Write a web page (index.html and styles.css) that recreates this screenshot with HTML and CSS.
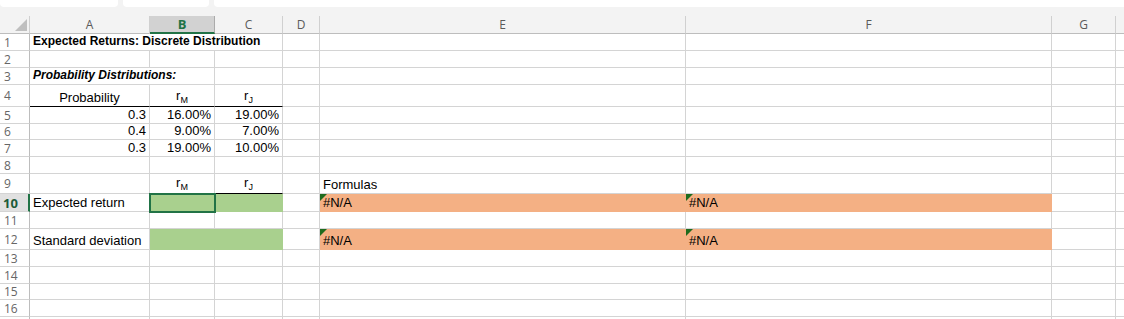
FILE: index.html
```html
<!DOCTYPE html>
<html>
<head>
    <meta charset="utf-8">
    <title>Expected Returns: Discrete Distribution</title>
    <link rel="stylesheet" href="styles.css">
</head>
<body>
    <div class="tabs">
        <div class="tab tab-first"></div>
        <div class="tab tab-second"></div>
        <div class="tab tab-rest"></div>
    </div>
    <div class="sheet" id="sheet"></div>

    <script>
        const columns = ["A", "B", "C", "D", "E", "F", "G", "H"];
        const activeColumn = "B";
        const activeRow = 10;
        const rowCount = 17;

        const cells = {
            A1: { text: "Expected Returns: Discrete Distribution", cls: "bold", span: 3 },
            A3: { text: "Probability Distributions:", cls: "bold italic", span: 2 },
            A4: { text: "Probability", cls: "center line-bottom" },
            B4: { html: "r<sub>M</sub>", cls: "center line-bottom" },
            C4: { html: "r<sub>J</sub>", cls: "center line-bottom" },
            A5: { text: "0.3", cls: "right" },
            B5: { text: "16.00%", cls: "right" },
            C5: { text: "19.00%", cls: "right" },
            A6: { text: "0.4", cls: "right" },
            B6: { text: "9.00%", cls: "right" },
            C6: { text: "7.00%", cls: "right" },
            A7: { text: "0.3", cls: "right" },
            B7: { text: "19.00%", cls: "right" },
            C7: { text: "10.00%", cls: "right" },
            B9: { html: "r<sub>M</sub>", cls: "center line-bottom" },
            C9: { html: "r<sub>J</sub>", cls: "center line-bottom" },
            E9: { text: "Formulas" },
            A10: { text: "Expected return" },
            B10: { cls: "green selected" },
            C10: { cls: "green" },
            E10: { text: "#N/A", cls: "orange err" },
            F10: { text: "#N/A", cls: "orange err" },
            A12: { text: "Standard deviation" },
            B12: { cls: "green", span: 2 },
            E12: { text: "#N/A", cls: "orange err" },
            F12: { text: "#N/A", cls: "orange err" }
        };

        function buildSheet() {
            const sheet = document.getElementById("sheet");

            const corner = document.createElement("div");
            corner.className = "corner";
            corner.innerHTML = '<span class="corner-mark"></span>';
            sheet.appendChild(corner);

            columns.forEach(col => {
                const head = document.createElement("div");
                head.className = "col-head" + (col === activeColumn ? " active" : "");
                head.textContent = col;
                sheet.appendChild(head);
            });

            for (let r = 1; r <= rowCount; r++) {
                const rowHead = document.createElement("div");
                rowHead.className = "row-head" + (r === activeRow ? " active" : "");
                rowHead.textContent = r;
                sheet.appendChild(rowHead);

                let skip = 0;
                columns.forEach(col => {
                    if (skip > 0) {
                        skip--;
                        return;
                    }
                    const data = cells[col + r] || {};
                    const cell = document.createElement("div");
                    cell.className = "cell " + (data.cls || "");
                    if (data.html || data.text) {
                        const value = document.createElement("span");
                        if (data.html) {
                            value.innerHTML = data.html;
                        } else {
                            value.textContent = data.text;
                        }
                        cell.appendChild(value);
                    }
                    if (data.span) {
                        cell.classList.add("span-" + data.span);
                        skip = data.span - 1;
                    }
                    sheet.appendChild(cell);
                });
            }
        }

        buildSheet();
    </script>
</body>
</html>
```

FILE: styles.css
```css
* {
    box-sizing: border-box;
}
body {
    margin: 0;
    overflow: hidden;
    background: #fff;
    font-family: "Liberation Sans", Arial, sans-serif;
}
.tabs {
    display: flex;
    gap: 5px;
    height: 16px;
    background: #f3f3f3;
}
.tab {
    height: 7px;
    background: #fff;
    border-radius: 0 0 4px 4px;
}
.tab-first {
    width: 118px;
}
.tab-second {
    width: 86px;
}
.tab-rest {
    flex: 1;
    border-radius: 0 0 0 4px;
}
.sheet {
    display: grid;
    grid-template-columns: 30px 120px 65px 68px 37px 366px 366px 64px 64px;
    grid-template-rows: 18px 17px 17px 17px 22px 17px 16px 17px 17px 20px 18px 17px 21px 17px 17px 16px 17px 17px;
    width: max-content;
}
.corner {
    background: #f3f3f3;
    border-right: 1px solid #d0d0d0;
    border-bottom: 1px solid #bdbdbd;
    display: flex;
    justify-content: flex-end;
    align-items: flex-end;
    padding: 0 2px 2px 0;
}
.corner-mark {
    width: 0;
    height: 0;
    border-bottom: 12px solid #bfbfbf;
    border-left: 12px solid transparent;
}
.col-head {
    background: #f3f3f3;
    border-right: 1px solid #d0d0d0;
    border-bottom: 1px solid #bdbdbd;
    display: flex;
    align-items: center;
    justify-content: center;
    font-family: "Open Sans", "Noto Sans", sans-serif;
    font-size: 12px;
    color: #5a5a5a;
}
.col-head.active {
    background: #d2d2d2;
    border-right-color: #ababab;
    border-bottom: 2px solid #217346;
    color: #217346;
    font-weight: bold;
    font-size: 13px;
}
.row-head {
    border-right: 1px solid #bdbdbd;
    border-bottom: 1px solid #d4d4d4;
    display: flex;
    align-items: center;
    padding-left: 4px;
    font-family: "Open Sans", "Noto Sans", sans-serif;
    font-size: 12px;
    color: #666;
}
.row-head.active {
    background: #e1e1e1;
    border-right: 2px solid #217346;
    color: #1d5c3a;
    font-weight: bold;
    font-size: 13px;
    padding-left: 3px;
}
.cell {
    position: relative;
    display: flex;
    align-items: flex-end;
    padding: 0 3px 1px;
    border-right: 1px solid #d4d4d4;
    border-bottom: 1px solid #d4d4d4;
    font-size: 13px;
    line-height: 15px;
    color: #000;
    white-space: nowrap;
}
.span-2 {
    grid-column: span 2;
}
.span-3 {
    grid-column: span 3;
}
.bold {
    font-weight: bold;
    font-size: 12px;
}
.italic {
    font-style: italic;
}
.right {
    justify-content: flex-end;
}
.center {
    justify-content: center;
}
.line-bottom {
    border-bottom-color: #000;
}
.cell sub {
    font-size: 9px;
    line-height: 9px;
    vertical-align: -3px;
}
.green {
    background: #a9d08e;
    border-color: transparent;
}
.orange {
    background: #f4b084;
    border-color: transparent;
}
.err::before {
    content: "";
    position: absolute;
    top: 0;
    left: 0;
    width: 0;
    height: 0;
    border-top: 7px solid #1e6b1e;
    border-right: 7px solid transparent;
}
.selected::after {
    content: "";
    position: absolute;
    top: -1px;
    left: -1px;
    right: -2px;
    bottom: -2px;
    border: 2px solid #217346;
    z-index: 2;
}
```
